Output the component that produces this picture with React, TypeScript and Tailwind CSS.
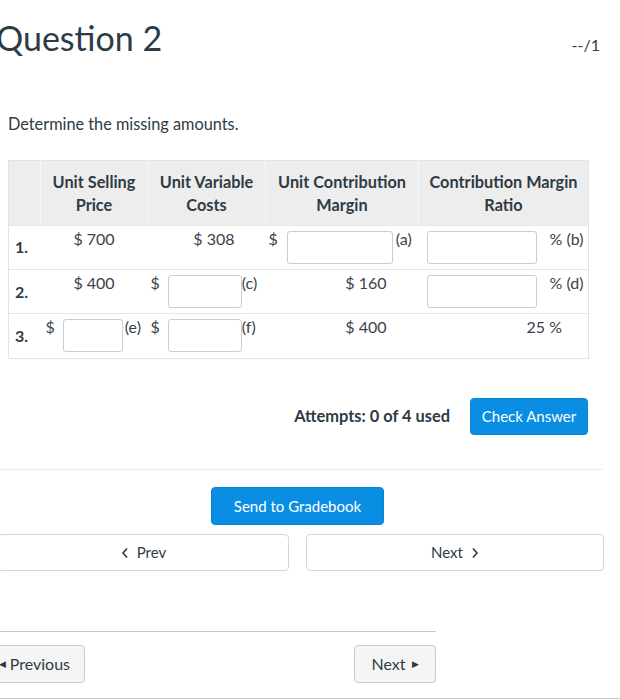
const font = { fontFamily: "Lato, 'Open Sans', sans-serif" }

function Box({ w }: { w: string }) {
  return <div className={`${w} h-[33px] mt-[2px] border border-[#c9cdd1] rounded-[3px] bg-white shrink-0`} />
}

export default function App() {
  return (
    <div className="w-[620px] h-[700px] bg-white overflow-hidden text-[#2d3b45]" style={font}>
      {/* Title */}
      <div className="flex items-baseline justify-between pt-[15px] pr-[20px]">
        <h2 className="ml-[-4px] text-[34px] leading-[45px] font-normal text-[#2d3b45]">Question 2</h2>
        <span className="text-[16px] text-[#2d3b45]">--/1</span>
      </div>

      <p className="mt-[52px] ml-[8px] text-[16.3px] leading-[24px] text-[#2d3b45]">Determine the missing amounts.</p>

      {/* Table */}
      <table className="mt-[24px] ml-[8px] w-[580px] table-fixed border-collapse border border-[#e3e3e3] text-[16px] leading-[20px] text-[#3b4249]">
        <colgroup>
          <col className="w-[32px]" />
          <col className="w-[107px]" />
          <col className="w-[118px]" />
          <col className="w-[153px]" />
          <col className="w-[170px]" />
        </colgroup>
        <thead>
          <tr className="bg-[#ededed] text-[#2d3b45] font-bold leading-[23px] text-[16.3px]">
            <th className="h-[64px] p-0 border-r border-[#f6f6f6]"></th>
            <th className="p-0 pt-[9px] pb-[9px] text-center font-bold border-r border-[#f6f6f6]">Unit Selling<br />Price</th>
            <th className="p-0 text-center font-bold border-r border-[#f6f6f6]">Unit Variable<br />Costs</th>
            <th className="p-0 text-center font-bold border-r border-[#f6f6f6]">Unit Contribution<br />Margin</th>
            <th className="p-0 text-center font-bold">Contribution Margin<br />Ratio</th>
          </tr>
        </thead>
        <tbody>
          <tr className="h-[44px] border-t border-[#e6e6e6]">
            <td className="p-0 pl-[6px] pb-[2px] align-middle font-bold text-[#2d3b45]">1.</td>
            <td className="p-0 pt-[3px] align-top text-center">$ 700</td>
            <td className="p-0 pt-[3px] pr-[31px] align-top text-right">$ 308</td>
            <td className="p-0 pt-[3px] align-top">
              <div className="flex items-start pl-[3px]">
                <span>$</span>
                <div className="ml-[9px]"><Box w="w-[106px]" /></div>
                <span className="ml-[3px]">(a)</span>
              </div>
            </td>
            <td className="p-0 pt-[3px] align-top">
              <div className="flex items-start pl-[8px]">
                <Box w="w-[110px]" />
                <span className="ml-[13px]">% (b)</span>
              </div>
            </td>
          </tr>
          <tr className="h-[44px] border-t border-[#e6e6e6]">
            <td className="p-0 pl-[6px] align-middle font-bold text-[#2d3b45]">2.</td>
            <td className="p-0 pt-[3px] align-top text-center">$ 400</td>
            <td className="p-0 pt-[3px] align-top">
              <div className="flex items-start pl-[3px]">
                <span>$</span>
                <div className="ml-[8px]"><Box w="w-[74px]" /></div>
                <span>(c)</span>
              </div>
            </td>
            <td className="p-0 pt-[3px] pr-[32px] align-top text-right">$ 160</td>
            <td className="p-0 pt-[3px] align-top">
              <div className="flex items-start pl-[8px]">
                <Box w="w-[110px]" />
                <span className="ml-[13px]">% (d)</span>
              </div>
            </td>
          </tr>
          <tr className="h-[45px] border-t border-[#e6e6e6]">
            <td className="p-0 pl-[6px] align-middle font-bold text-[#2d3b45]">3.</td>
            <td className="p-0 pt-[3px] align-top">
              <div className="flex items-start pl-[5px]">
                <span>$</span>
                <div className="ml-[8px]"><Box w="w-[60px]" /></div>
                <span className="ml-[2px]">(e)</span>
              </div>
            </td>
            <td className="p-0 pt-[3px] align-top">
              <div className="flex items-start pl-[3px]">
                <span>$</span>
                <div className="ml-[8px]"><Box w="w-[74px]" /></div>
                <span>(f)</span>
              </div>
            </td>
            <td className="p-0 pt-[3px] pr-[32px] align-top text-right">$ 400</td>
            <td className="p-0 pt-[3px] pr-[26px] align-top text-right">25 %</td>
          </tr>
        </tbody>
      </table>

      {/* Attempts */}
      <div className="mt-[39px] flex items-center justify-end pr-[32px] gap-[20px]">
        <span className="text-[16.4px] font-bold text-[#2d3b45]">Attempts: 0 of 4 used</span>
        <button className="h-[37px] w-[118px] rounded-[4px] bg-[#0a8ee4] text-white text-[15px] border border-[#0a84d4]">Check Answer</button>
      </div>

      <div className="mt-[34px] w-[603px] border-t border-[#ececec]" />

      <div className="mt-[17px] ml-[211px]">
        <button className="h-[38px] w-[173px] rounded-[4px] bg-[#0a8ee4] text-white text-[15px] border border-[#0a84d4]">Send to Gradebook</button>
      </div>

      {/* Prev / Next */}
      <div className="mt-[9px] flex ml-[-2px]">
        <button className="h-[37px] w-[291px] rounded-[4px] border border-[#d6d6d6] bg-white flex items-center justify-center gap-[8px] text-[15px] text-[#2d3b45]">
          <svg width="8" height="12" viewBox="0 0 8 12" fill="none" stroke="#2d3b45" strokeWidth="1.6"><polyline points="6,1.5 2,6 6,10.5" /></svg>
          Prev
        </button>
        <button className="ml-[17px] h-[37px] w-[298px] rounded-[4px] border border-[#d6d6d6] bg-white flex items-center justify-center gap-[8px] text-[15px] text-[#2d3b45]">
          Next
          <svg width="8" height="12" viewBox="0 0 8 12" fill="none" stroke="#2d3b45" strokeWidth="1.6"><polyline points="2,1.5 6,6 2,10.5" /></svg>
        </button>
      </div>

      <div className="mt-[60px] w-[436px] border-t border-[#c8c8c8]" />

      <div className="mt-[13px] flex w-[436px]">
        <button className="ml-[-14px] h-[38px] w-[99px] rounded-[4px] border border-[#c7cdd1] bg-[#f5f5f5] flex items-center justify-end pr-[14px] gap-[4px] text-[16px] text-[#2d3b45]">
          <span className="text-[9px]">◀</span>Previous
        </button>
        <button className="ml-auto h-[38px] w-[82px] rounded-[4px] border border-[#c7cdd1] bg-[#f5f5f5] flex items-center justify-center gap-[6px] text-[16px] text-[#2d3b45]">
          Next<span className="text-[9px]">▶</span>
        </button>
      </div>

      <div className="mt-[15px] w-full border-t border-[#c8c8c8]" />
    </div>
  )
}
